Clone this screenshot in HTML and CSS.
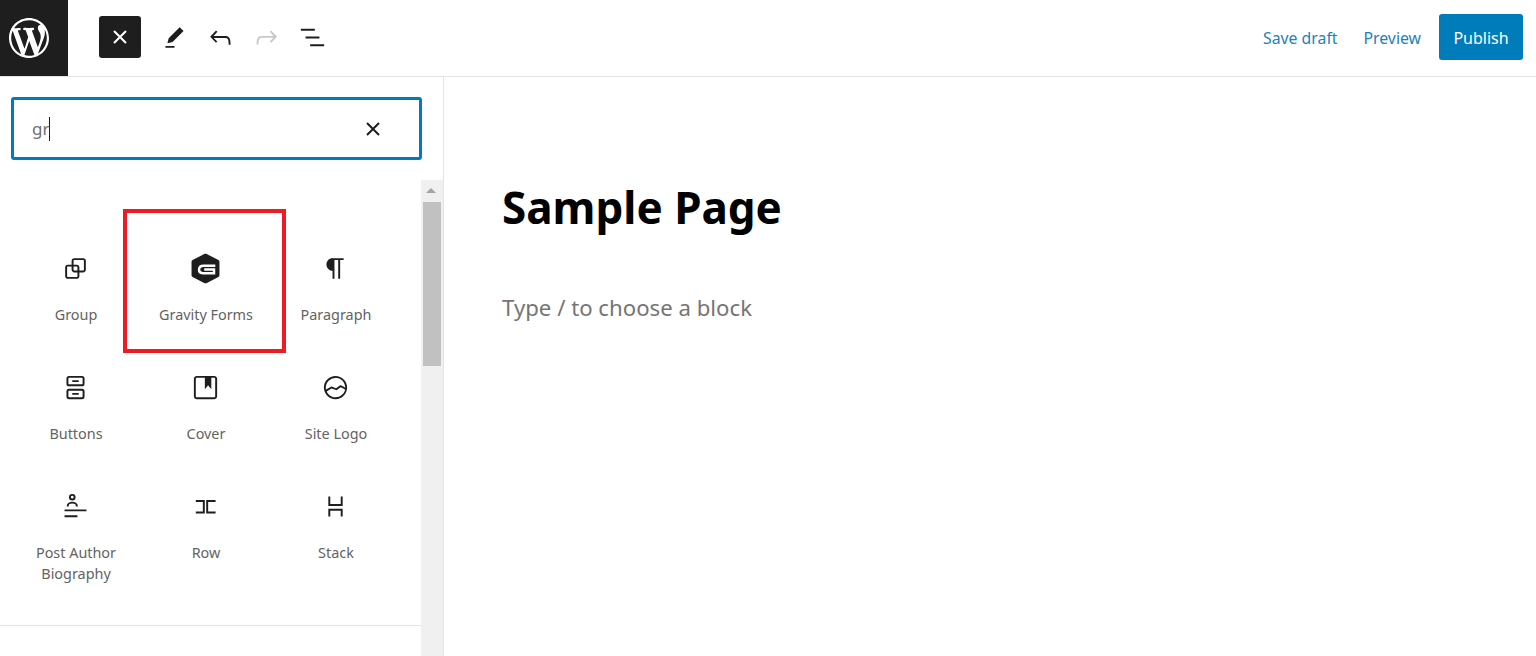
FILE: index.html
```html
<!DOCTYPE html>
<html lang="en">
<head>
    <meta charset="UTF-8">
    <title>Edit Page</title>
    <link rel="stylesheet" href="styles.css">
</head>
<body>
<div class="header">
    <div class="header-left">
        <a class="wp-logo">
            <svg viewBox="0 0 20 20" width="40" height="40"><path fill="#fff" d="M20 10c0-5.51-4.49-10-10-10C4.48 0 0 4.49 0 10c0 5.52 4.48 10 10 10 5.51 0 10-4.48 10-10zM7.78 15.37L4.37 6.22c.55-.02 1.17-.08 1.17-.08.5-.06.44-1.13-.06-1.11 0 0-1.45.11-2.37.11-.18 0-.37 0-.58-.01C4.12 2.69 6.87 1.11 10 1.11c2.33 0 4.45.87 6.05 2.34-.68-.11-1.65.39-1.65 1.58 0 .74.45 1.36.9 2.1.35.61.55 1.36.55 2.46 0 1.49-1.4 5-1.4 5l-3.03-8.37c.54-.02.82-.17.82-.17.5-.05.44-1.25-.06-1.22 0 0-1.44.12-2.38.12-.87 0-2.33-.12-2.33-.12-.5-.03-.56 1.2-.06 1.22l.92.08 1.26 3.41zM17.41 10c.24-.64.74-1.87.43-4.25.7 1.29 1.05 2.71 1.05 4.25 0 3.29-1.73 6.24-4.4 7.78.97-2.59 1.94-5.2 2.92-7.78zM6.1 18.09C3.12 16.65 1.11 13.53 1.11 10c0-1.3.23-2.48.72-3.59C3.25 10.3 4.67 14.2 6.1 18.09zm4.03-6.63l2.58 6.98c-.86.29-1.76.45-2.71.45-.79 0-1.57-.11-2.29-.33.81-2.38 1.62-4.74 2.42-7.1z"/></svg>
        </a>
        <div class="toolbar">
            <button class="tool tool-close">
                <svg class="icon-sm" viewBox="0 0 16 16"><path d="M2 2l12 12M14 2L2 14" stroke="#fff"/></svg>
            </button>
            <button class="tool">
                <svg class="icon" viewBox="0 0 24 24"><path d="m19 7-3-3-8.5 8.5-1 4 4-1L19 7Zm-7 11.5H5V20h7v-1.5Z"/></svg>
            </button>
            <button class="tool">
                <svg class="icon" viewBox="0 0 24 24"><path d="M18.3 11.7c-.6-.6-1.4-.9-2.3-.9H6.7l2.9-3.3-1.1-1-4.5 5L8.5 16l1-1-2.7-2.7H16c.5 0 .9.2 1.3.5 1 1 1 3.4 1 4.5v.3h1.5v-.2c0-1.5 0-4.3-1.5-5.7z"/></svg>
            </button>
            <button class="tool tool-disabled">
                <svg class="icon" viewBox="0 0 24 24"><path d="M15.6 6.5l-1.1 1 2.9 3.3H8c-.9 0-1.7.3-2.3.9-1.4 1.5-1.4 4.2-1.4 5.6v.2h1.5v-.3c0-1.1 0-3.5 1-4.5.3-.3.7-.5 1.3-.5h9.2L14.5 15l1.1 1.1 4.6-4.6-4.6-5z"/></svg>
            </button>
            <button class="tool">
                <svg class="icon" viewBox="0 0 24 24"><path d="M13.8 5.2H3v1.5h10.8V5.2zm-3.6 12v1.5H21v-1.5H10.2zm7.2-6H6.6v1.5h10.8v-1.5z"/></svg>
            </button>
        </div>
    </div>
    <div class="header-right">
        <a class="link-btn">Save draft</a>
        <a class="link-btn">Preview</a>
        <button class="publish-btn">Publish</button>
    </div>
</div>

<div class="content">
    <div class="inserter">
        <div class="search-wrap">
            <div class="search-box">
                <span class="search-text">gr</span>
                <svg class="icon-sm search-clear" viewBox="0 0 16 16"><path d="M2 2l12 12M14 2L2 14" stroke="#1e1e1e"/></svg>
            </div>
        </div>
        <div class="results">
            <div class="results-main">
                <div class="block-grid">
                    <div class="block-item">
                        <svg class="icon" viewBox="0 0 24 24"><path d="M18 4h-7c-1.1 0-2 .9-2 2v3H6c-1.1 0-2 .9-2 2v7c0 1.1.9 2 2 2h7c1.1 0 2-.9 2-2v-3h3c1.1 0 2-.9 2-2V6c0-1.1-.9-2-2-2zm-4.5 14c0 .3-.2.5-.5.5H6c-.3 0-.5-.2-.5-.5v-7c0-.3.2-.5.5-.5h3V13c0 1.1.9 2 2 2h2.5v3zm0-4.5H11c-.3 0-.5-.2-.5-.5v-2.5H13c.3 0 .5.2.5.5v2.5zm5-.5c0 .3-.2.5-.5.5h-3V11c0-1.1-.9-2-2-2h-2.5V6c0-.3.2-.5.5-.5h7c.3 0 .5.2.5.5v7z"/></svg>
                        <span class="block-label">Group</span>
                    </div>
                    <div class="block-item">
                        <svg class="icon" viewBox="0 0 24 24">
                            <path d="M12 2 21.3 6.8V17.2L12 22 2.7 17.2V6.8Z" stroke="#1e1e1e" stroke-width="3" stroke-linejoin="round"/>
                            <path d="M19.6 9.9H10.6Q7 9.9 7 13Q7 15.6 9.8 15.6H18.6V12.7H11" fill="none" stroke="#fff" stroke-width="1.9"/>
                        </svg>
                        <span class="block-label">Gravity Forms</span>
                    </div>
                    <div class="block-item">
                        <svg class="icon" viewBox="0 0 24 24"><path d="M18.3 4H9.9v-.1l-.9.2c-2.3.4-4 2.4-4 4.8s1.7 4.4 4 4.8l.7.1V20h1.5V5.5h2.9V20h1.5V5.5h2.7V4z"/></svg>
                        <span class="block-label">Paragraph</span>
                    </div>
                    <div class="block-item">
                        <svg class="icon" viewBox="0 0 24 24"><path fill-rule="evenodd" d="M7 3h10a2 2 0 0 1 2 2v4a2 2 0 0 1-2 2H7a2 2 0 0 1-2-2V5a2 2 0 0 1 2-2Zm0 1.5a.5.5 0 0 0-.5.5v4a.5.5 0 0 0 .5.5h10a.5.5 0 0 0 .5-.5V5a.5.5 0 0 0-.5-.5H7ZM7 13h10a2 2 0 0 1 2 2v4a2 2 0 0 1-2 2H7a2 2 0 0 1-2-2v-4a2 2 0 0 1 2-2Zm0 1.5a.5.5 0 0 0-.5.5v4a.5.5 0 0 0 .5.5h10a.5.5 0 0 0 .5-.5v-4a.5.5 0 0 0-.5-.5H7ZM9.5 6.3h5v1.4h-5ZM9.5 16.3h5v1.4h-5Z"/></svg>
                        <span class="block-label">Buttons</span>
                    </div>
                    <div class="block-item">
                        <svg class="icon" viewBox="0 0 24 24"><path d="M18.7 3H5.3C4 3 3 4 3 5.3v13.4C3 20 4 21 5.3 21h13.4c1.3 0 2.3-1 2.3-2.3V5.3C21 4 20 3 18.7 3zm.8 15.7c0 .4-.4.8-.8.8H5.3c-.4 0-.8-.4-.8-.8V5.3c0-.4.4-.8.8-.8h6.2v8.9l2.5-3.1 2.5 3.1V4.5h2.2c.4 0 .8.4.8.8v13.4z"/></svg>
                        <span class="block-label">Cover</span>
                    </div>
                    <div class="block-item">
                        <svg class="icon" viewBox="0 0 24 24"><path d="M12 3c-5 0-9 4-9 9s4 9 9 9 9-4 9-9-4-9-9-9zm0 1.5c4.1 0 7.5 3.4 7.5 7.5v.1c-1.4-.8-3.3-1.7-3.4-1.8-.2-.1-.5-.1-.8.1l-2.9 2.1L9 11.3c-.2-.1-.4 0-.6.1l-3.7 2.2c-.1-.5-.2-1-.2-1.5 0-4.1 3.4-7.5 7.5-7.5zm0 15c-3.1 0-5.7-1.9-6.8-4.5l3.7-2.2 3.5 1.2c.2.1.5 0 .7-.1l2.9-2.1c.8.4 2.5 1.2 3.5 1.9-.9 3.3-3.9 5.8-7.5 5.8z"/></svg>
                        <span class="block-label">Site Logo</span>
                    </div>
                    <div class="block-item">
                        <svg class="icon icon-line" viewBox="0 0 24 24">
                            <circle cx="9.5" cy="4.8" r="1.8"/>
                            <path d="M6 12v-.6C6 10 7.8 9 9.5 9s3.5 1 3.5 2.4v.6"/>
                            <path d="M3.5 15h17M3.5 19.5h10"/>
                        </svg>
                        <span class="block-label">Post Author Biography</span>
                    </div>
                    <div class="block-item">
                        <svg class="icon icon-line" viewBox="0 0 24 24"><path d="M4.5 7.7h6.2v9H4.5M19.8 7.7h-6.5v9h6.5"/></svg>
                        <span class="block-label">Row</span>
                    </div>
                    <div class="block-item">
                        <svg class="icon icon-line" viewBox="0 0 24 24"><path d="M7.2 4.3v6.5h9.6V4.3M7.2 19.8v-5.3h9.6v5.3"/></svg>
                        <span class="block-label">Stack</span>
                    </div>
                </div>
                <div class="results-divider"></div>
            </div>
            <div class="scrollbar">
                <div class="scroll-arrow"></div>
                <div class="scroll-thumb"></div>
            </div>
        </div>
        <!-- red highlight around the Gravity Forms block -->
        <div class="highlight"></div>
    </div>
    <div class="editor">
        <h1 class="page-title">Sample Page</h1>
        <p class="block-hint">Type / to choose a block</p>
    </div>
</div>
</body>
</html>
```

FILE: styles.css
```css
* {
    box-sizing: border-box;
    margin: 0;
    padding: 0;
}

html, body {
    height: 100%;
    overflow: hidden;
}

body {
    font-family: "Noto Sans", "Open Sans", sans-serif;
    background-color: #fff;
    color: #1e1e1e;
}

.icon {
    width: 31px;
    height: 31px;
    fill: #1e1e1e;
    display: block;
}

.icon-line {
    fill: none;
    stroke: #1e1e1e;
    stroke-width: 1.5;
}

.icon-sm {
    width: 16px;
    height: 16px;
    fill: none;
    stroke-width: 2;
    display: block;
}

.header {
    height: 77px;
    display: flex;
    justify-content: space-between;
    border-bottom: 1px solid #e4e4e4;
}

.header-left {
    display: flex;
}

.wp-logo {
    width: 68px;
    height: 76px;
    background-color: #1e1e1e;
    display: flex;
    align-items: center;
    padding-left: 9px;
    margin-right: 31px;
}

.toolbar {
    display: flex;
    align-items: center;
    gap: 15px;
    padding-bottom: 2px;
}

.tool {
    width: 31px;
    height: 42px;
    border: none;
    background: none;
    display: flex;
    align-items: center;
    justify-content: center;
}

.tool-close {
    width: 42px;
    background-color: #1e1e1e;
    border-radius: 3px;
    margin-right: 3px;
}

.tool-disabled .icon {
    fill: #c9c9c9;
}

.header-right {
    display: flex;
    align-items: center;
    padding-right: 13px;
    padding-bottom: 2px;
}

.link-btn {
    color: #1b82bb;
    font-size: 15.8px;
    margin-top: 2px;
    margin-right: 26px;
}

.link-btn:nth-child(2) {
    margin-right: 18px;
}

.publish-btn {
    width: 84px;
    height: 46px;
    padding-top: 2px;
    background-color: #007cba;
    color: #fff;
    border: none;
    border-radius: 3px;
    font-family: inherit;
    font-size: 16px;
}

.content {
    display: flex;
    height: 579px;
}

.inserter {
    position: relative;
    width: 444px;
    border-right: 1px solid #e4e4e4;
    display: flex;
    flex-direction: column;
}

.search-wrap {
    height: 103px;
    padding: 20px 21px 0 11px;
}

.search-box {
    height: 63px;
    border: 3px solid #007cba;
    border-radius: 3px;
    display: flex;
    align-items: center;
    justify-content: space-between;
    padding: 0 38px 0 18px;
}

.search-text {
    font-size: 17px;
    color: #6f6f6f;
    border-right: 1px solid #1e1e1e;
    line-height: 24px;
}

.results {
    flex: 1;
    display: flex;
    min-height: 0;
}

.results-main {
    width: 421px;
    padding-top: 73px;
}

.block-grid {
    display: grid;
    grid-template-columns: repeat(3, 130px);
    grid-auto-rows: 119px;
    padding-left: 11px;
}

.block-item {
    display: flex;
    flex-direction: column;
    align-items: center;
    text-align: center;
}

.block-item .icon {
    margin-left: -1px;
}

.block-label {
    margin-top: 20px;
    font-size: 14.4px;
    line-height: 21px;
    color: #636363;
    width: 104px;
}

.results-divider {
    height: 1px;
    background-color: #e4e4e4;
    margin-top: 15px;
}

.scrollbar {
    width: 22px;
    background-color: #f0f0f0;
    padding: 0 2px 0 2px;
}

.scroll-arrow {
    height: 22px;
    position: relative;
}

.scroll-arrow::after {
    content: "";
    position: absolute;
    left: 3px;
    top: 8px;
    border-left: 5px solid transparent;
    border-right: 5px solid transparent;
    border-bottom: 5px solid #a3a3a3;
}

.scroll-thumb {
    height: 164px;
    background-color: #c1c1c1;
}

.highlight {
    position: absolute;
    left: 123px;
    top: 132px;
    width: 163px;
    height: 144px;
    border: 4px solid #ed1c24;
    pointer-events: none;
}

.editor {
    flex: 1;
    padding: 100px 0 0 58px;
}

.page-title {
    font-size: 44px;
    font-weight: 700;
    line-height: 60px;
    color: #000;
}

.block-hint {
    margin-top: 55px;
    font-size: 22.2px;
    line-height: 32px;
    color: #757575;
}
```
